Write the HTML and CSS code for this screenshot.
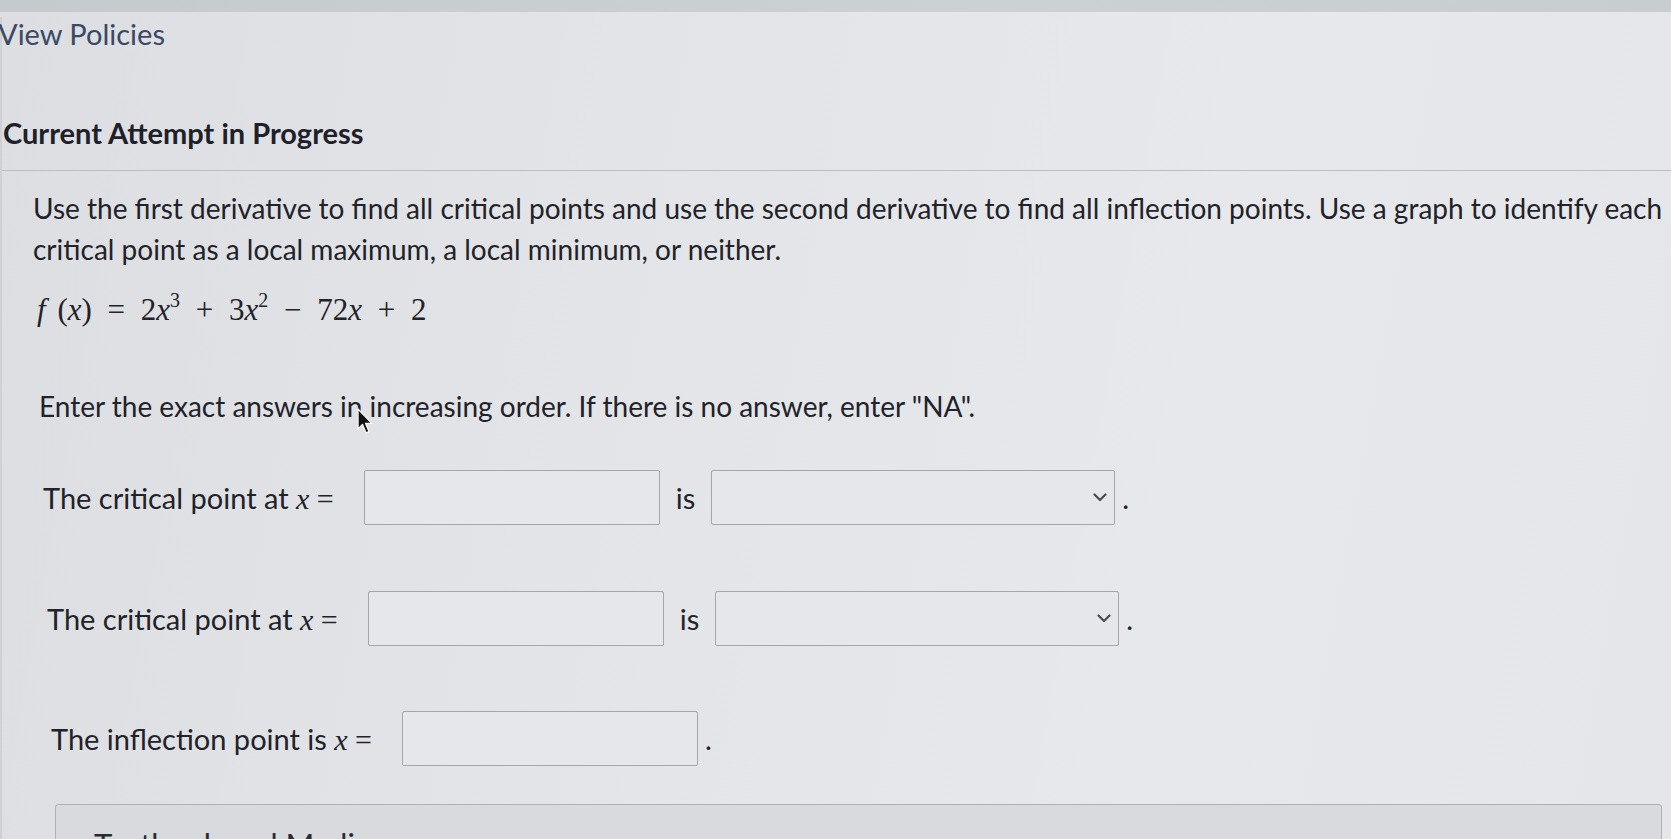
FILE: index.html
```html
<!DOCTYPE html>
<html lang="en">
<head>
<meta charset="utf-8">
<title>Current Attempt in Progress</title>
<link rel="stylesheet" href="styles.css">
</head>
<body>
<div class="topbar"></div>
<main class="page">
  <a class="policies" href="#">View Policies</a>
  <h1 class="attempt">Current Attempt in Progress</h1>
  <hr class="divider">
  <section class="question">
    <p class="prompt">Use the first derivative to find all critical points and use the second derivative to find all inflection points. Use a graph to identify each critical point as a local maximum, a local minimum, or neither.</p>
    <p class="formula"><span class="mi">f</span> <span class="paren">(</span><span class="mi">x</span>) <span class="op">=</span> 2<span class="mi">x</span><sup>3</sup> <span class="op">+</span> 3<span class="mi">x</span><sup>2</sup> <span class="op">−</span> 72<span class="mi">x</span> <span class="op">+</span> 2</p>
    <p class="instruct">Enter the exact answers in increasing order. If there is no answer, enter "NA".</p>

    <div class="row row-a">
      <span class="label">The critical point at <span class="mx">x</span> <span class="meq">=</span></span>
      <span class="box input"></span>
      <span class="is">is</span>
      <span class="box select"><svg class="chev" width="14" height="9" viewBox="0 0 14 9"><path d="M1.5 1.5 L7 7 L12.5 1.5" fill="none" stroke="#4a4b52" stroke-width="2.2" stroke-linecap="round" stroke-linejoin="round"/></svg></span>
      <span class="dot">.</span>
    </div>

    <div class="row row-b">
      <span class="label">The critical point at <span class="mx">x</span> <span class="meq">=</span></span>
      <span class="box input"></span>
      <span class="is">is</span>
      <span class="box select"><svg class="chev" width="14" height="9" viewBox="0 0 14 9"><path d="M1.5 1.5 L7 7 L12.5 1.5" fill="none" stroke="#4a4b52" stroke-width="2.2" stroke-linecap="round" stroke-linejoin="round"/></svg></span>
      <span class="dot">.</span>
    </div>

    <div class="row row-c">
      <span class="label">The inflection point is <span class="mx">x</span> <span class="meq">=</span></span>
      <span class="box input"></span>
      <span class="dot">.</span>
    </div>
  </section>
  <div class="media">
    <span class="media-title">Textbook and Media</span>
  </div>
  <svg class="cursor" width="18" height="28" viewBox="0 0 18 28"><path d="M2 1 L2 21 L6.5 16.5 L10 25 L13 23.6 L9.6 15.4 L16 15.4 Z" fill="#111" stroke="#f4f4f4" stroke-width="1.4" stroke-linejoin="round"/></svg>
</main>
</body>
</html>
```
FILE: styles.css
```css
html, body {
  margin: 0;
  padding: 0;
}
body {
  width: 1671px;
  height: 839px;
  overflow: hidden;
  background: linear-gradient(100deg, #dcdee2 0%, #e2e4e7 35%, #e7e8eb 70%, #e5e6e9 100%);
  font-family: Lato, "Open Sans", sans-serif;
  color: #222229;
}
.topbar {
  height: 12px;
  background: linear-gradient(90deg, #c6c9ce, #cdd0d4 60%, #c9ccd0);
}
.page {
  position: relative;
  border-left: 2px solid #cfd1d5;
}
.policies {
  display: block;
  margin: 5px 0 0 -4px;
  font-size: 29px;
  line-height: 34px;
  color: #3b4964;
  text-decoration: none;
}
.attempt {
  margin: 65px 0 0 1px;
  font-size: 29px;
  line-height: 34px;
  font-weight: 700;
  color: #202028;
}
.divider {
  margin: 20px 0 0 0;
  border: 0;
  height: 1px;
  background: #babdc2;
}
.question {
  padding-left: 31px;
  font-size: 29px;
  line-height: 41px;
}
.prompt {
  margin: 17px 0 0 0;
  padding-right: 4px;
  font-size: 28px;
}
.formula {
  margin: 20px 0 0 4px;
  font-family: "Liberation Serif", "Times New Roman", serif;
  font-size: 31px;
  line-height: 40px;
  word-spacing: 4px;
}
.formula .mi {
  font-style: italic;
}
.formula sup {
  font-size: 20px;
  line-height: 0;
  vertical-align: 13px;
}
.formula .op {
  margin: 0 4px;
}
.instruct {
  margin: 56px 0 0 6px;
  font-size: 28px;
}
.row {
  display: flex;
  align-items: center;
  height: 55px;
}
.row-a { margin: 43px 0 0 10px; }
.row-b { margin: 66px 0 0 14px; }
.row-c { margin: 65px 0 0 18px; }
.label {
  white-space: pre;
}
.mx {
  font-family: "Liberation Serif", serif;
  font-style: italic;
  font-size: 30px;
}
.meq {
  font-family: "Liberation Serif", serif;
  font-size: 30px;
}
.box {
  box-sizing: border-box;
  height: 55px;
  border: 1.5px solid #a4a6ab;
  border-radius: 2px;
  background: #e6e7ea;
}
.input {
  width: 296px;
  margin-left: 30px;
}
.is {
  margin: 0 16px 0 16px;
}
.select {
  width: 404px;
  display: flex;
  align-items: center;
  justify-content: flex-end;
  padding-right: 7px;
}
.chev {
  display: block;
}
.dot {
  margin-left: 7px;
}
.media {
  margin: 38px 9px 0 53px;
  height: 60px;
  box-sizing: border-box;
  border: 1.5px solid #aeb1b5;
  border-radius: 3px;
  background: #d8dadd;
  padding: 21px 0 0 38px;
}
.media-title {
  font-size: 31px;
  line-height: 36px;
  color: #2a2a31;
}
.cursor {
  position: absolute;
  left: 354px;
  top: 391px;
}
```
